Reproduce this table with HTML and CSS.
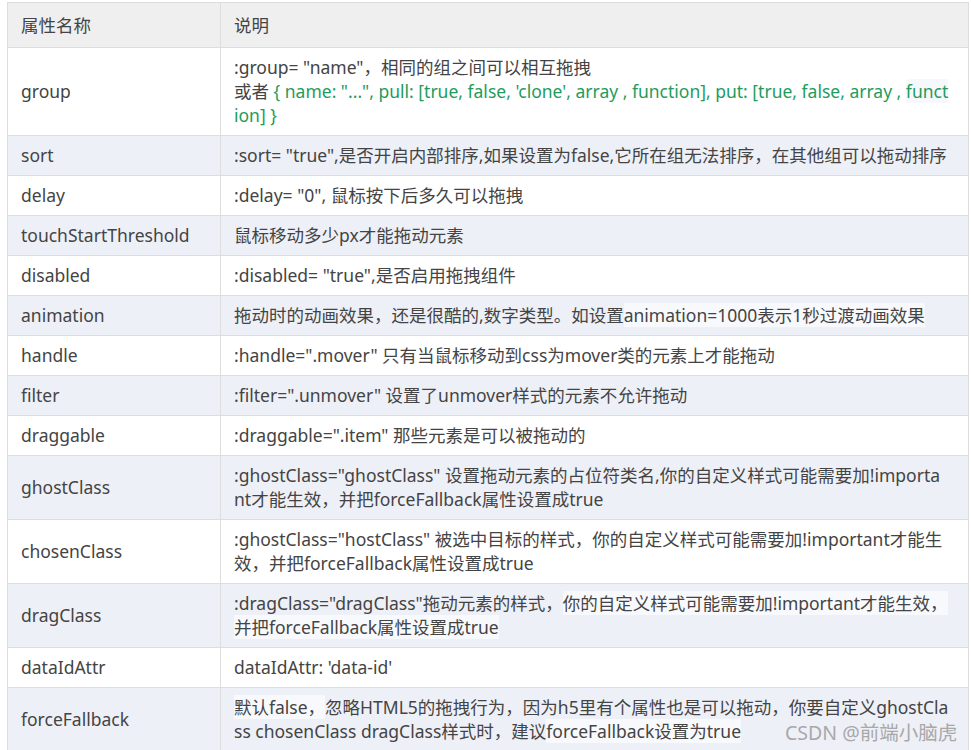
FILE: index.html
```html
<!DOCTYPE html>
<html lang="zh">
<head>
<meta charset="utf-8">
<title>属性</title>
<link rel="stylesheet" href="styles.css">
</head>
<body>
<div class="wrap">
<table class="props">
  <thead>
    <tr><th class="c1">属性名称</th><th class="c2">说明</th></tr>
  </thead>
  <tbody>
    <tr><td>group</td><td>:group= "name"，相同的组之间可以相互拖拽<br>或者 <span class="green">{ name: "...", pull: [true, false, 'clone', array , function], put: [true, false, array , <span class="hl">funct</span><br>ion] }</span></td></tr>
    <tr class="alt"><td>sort</td><td>:sort= "true",是否开启内部排序,如果设置为false,它所在组无法排序，在其他组可以拖动排序</td></tr>
    <tr><td>delay</td><td>:delay= "0", 鼠标按下后多久可以拖拽</td></tr>
    <tr class="alt"><td>touchStartThreshold</td><td>鼠标移动多少px才能拖动元素</td></tr>
    <tr><td>disabled</td><td>:disabled= "true",是否启用拖拽组件</td></tr>
    <tr class="alt"><td>animation</td><td>拖动时的动画效果，还是很酷的,数字类型。如设置<span class="hl">animation=1000表示1秒过渡动画效果</span></td></tr>
    <tr><td>handle</td><td>:handle=".mover" 只有当鼠标移动到css为mover类的元素上才能拖动</td></tr>
    <tr class="alt"><td>filter</td><td>:filter=".unmover" 设置了unmover样式的元素不允许拖动</td></tr>
    <tr><td>draggable</td><td>:draggable=".item" 那些元素是可以被拖动的</td></tr>
    <tr class="alt"><td>ghostClass</td><td>:ghostClass="ghostClass" 设置拖动元素的占位符类名,你的自定义样式可能需要加!importa<br>nt才能生效，并把forceFallback属性设置成true</td></tr>
    <tr><td>chosenClass</td><td>:ghostClass="hostClass" 被选中目标的样式，你的自定义样式可能需要加!important才能生<br>效，并把forceFallback属性设置成true</td></tr>
    <tr class="alt"><td>dragClass</td><td>:dragClass="dragClass"拖动元素的样式，<span class="hl">你的自定义样式可能需要加!important才能生效，</span><br><span class="hl">并把forceFallback属性设置成true</span></td></tr>
    <tr><td>dataIdAttr</td><td>dataIdAttr: 'data-id'</td></tr>
    <tr class="alt"><td>forceFallback</td><td><span class="hl">默认false，</span>忽略HTML5的拖拽行为，因为h5里有个属性也是可以拖动，你要自定义ghostCla<br>ss chosenClass dragClass样式时，建议<span class="hl">forceFallback设置为true</span></td></tr>
  </tbody>
</table>
<div class="watermark">CSDN @前端小脑虎</div>
</div>
</body>
</html>
```

FILE: styles.css
```css
html, body {
  margin: 0;
  padding: 0;
  background: #ffffff;
}
body {
  font-family: "Noto Sans", "Noto Sans CJK SC", sans-serif;
  font-size: 17.5px;
  color: #444444;
  overflow: hidden;
}
.wrap {
  position: relative;
  padding: 2px 0 0 7px;
  height: 748px;
}
.props {
  border-collapse: collapse;
  width: 962px;
  table-layout: fixed;
}
.props th, .props td {
  border: 1px solid #dddddd;
  text-align: left;
  vertical-align: middle;
  line-height: 24px;
  padding: 7px 13px 8px 13px;
  white-space: nowrap;
  overflow: hidden;
}
.props th {
  font-weight: normal;
  background: #efefef;
  padding-top: 10px;
  padding-bottom: 10px;
}
.c1 { width: 186px; }
.props tr.alt td {
  background: #eef0f7;
}
.green {
  color: #1e9c5c;
}
.hl {
  background: #f8f9fc;
}
.props tr:not(.alt) .hl {
  background: #f6f8fb;
}
.watermark {
  position: absolute;
  left: 785px;
  top: 717px;
  font-size: 19.5px;
  color: #a8a8a8;
  white-space: nowrap;
  font-family: "Noto Sans", "Noto Sans CJK SC", sans-serif;
}
```
